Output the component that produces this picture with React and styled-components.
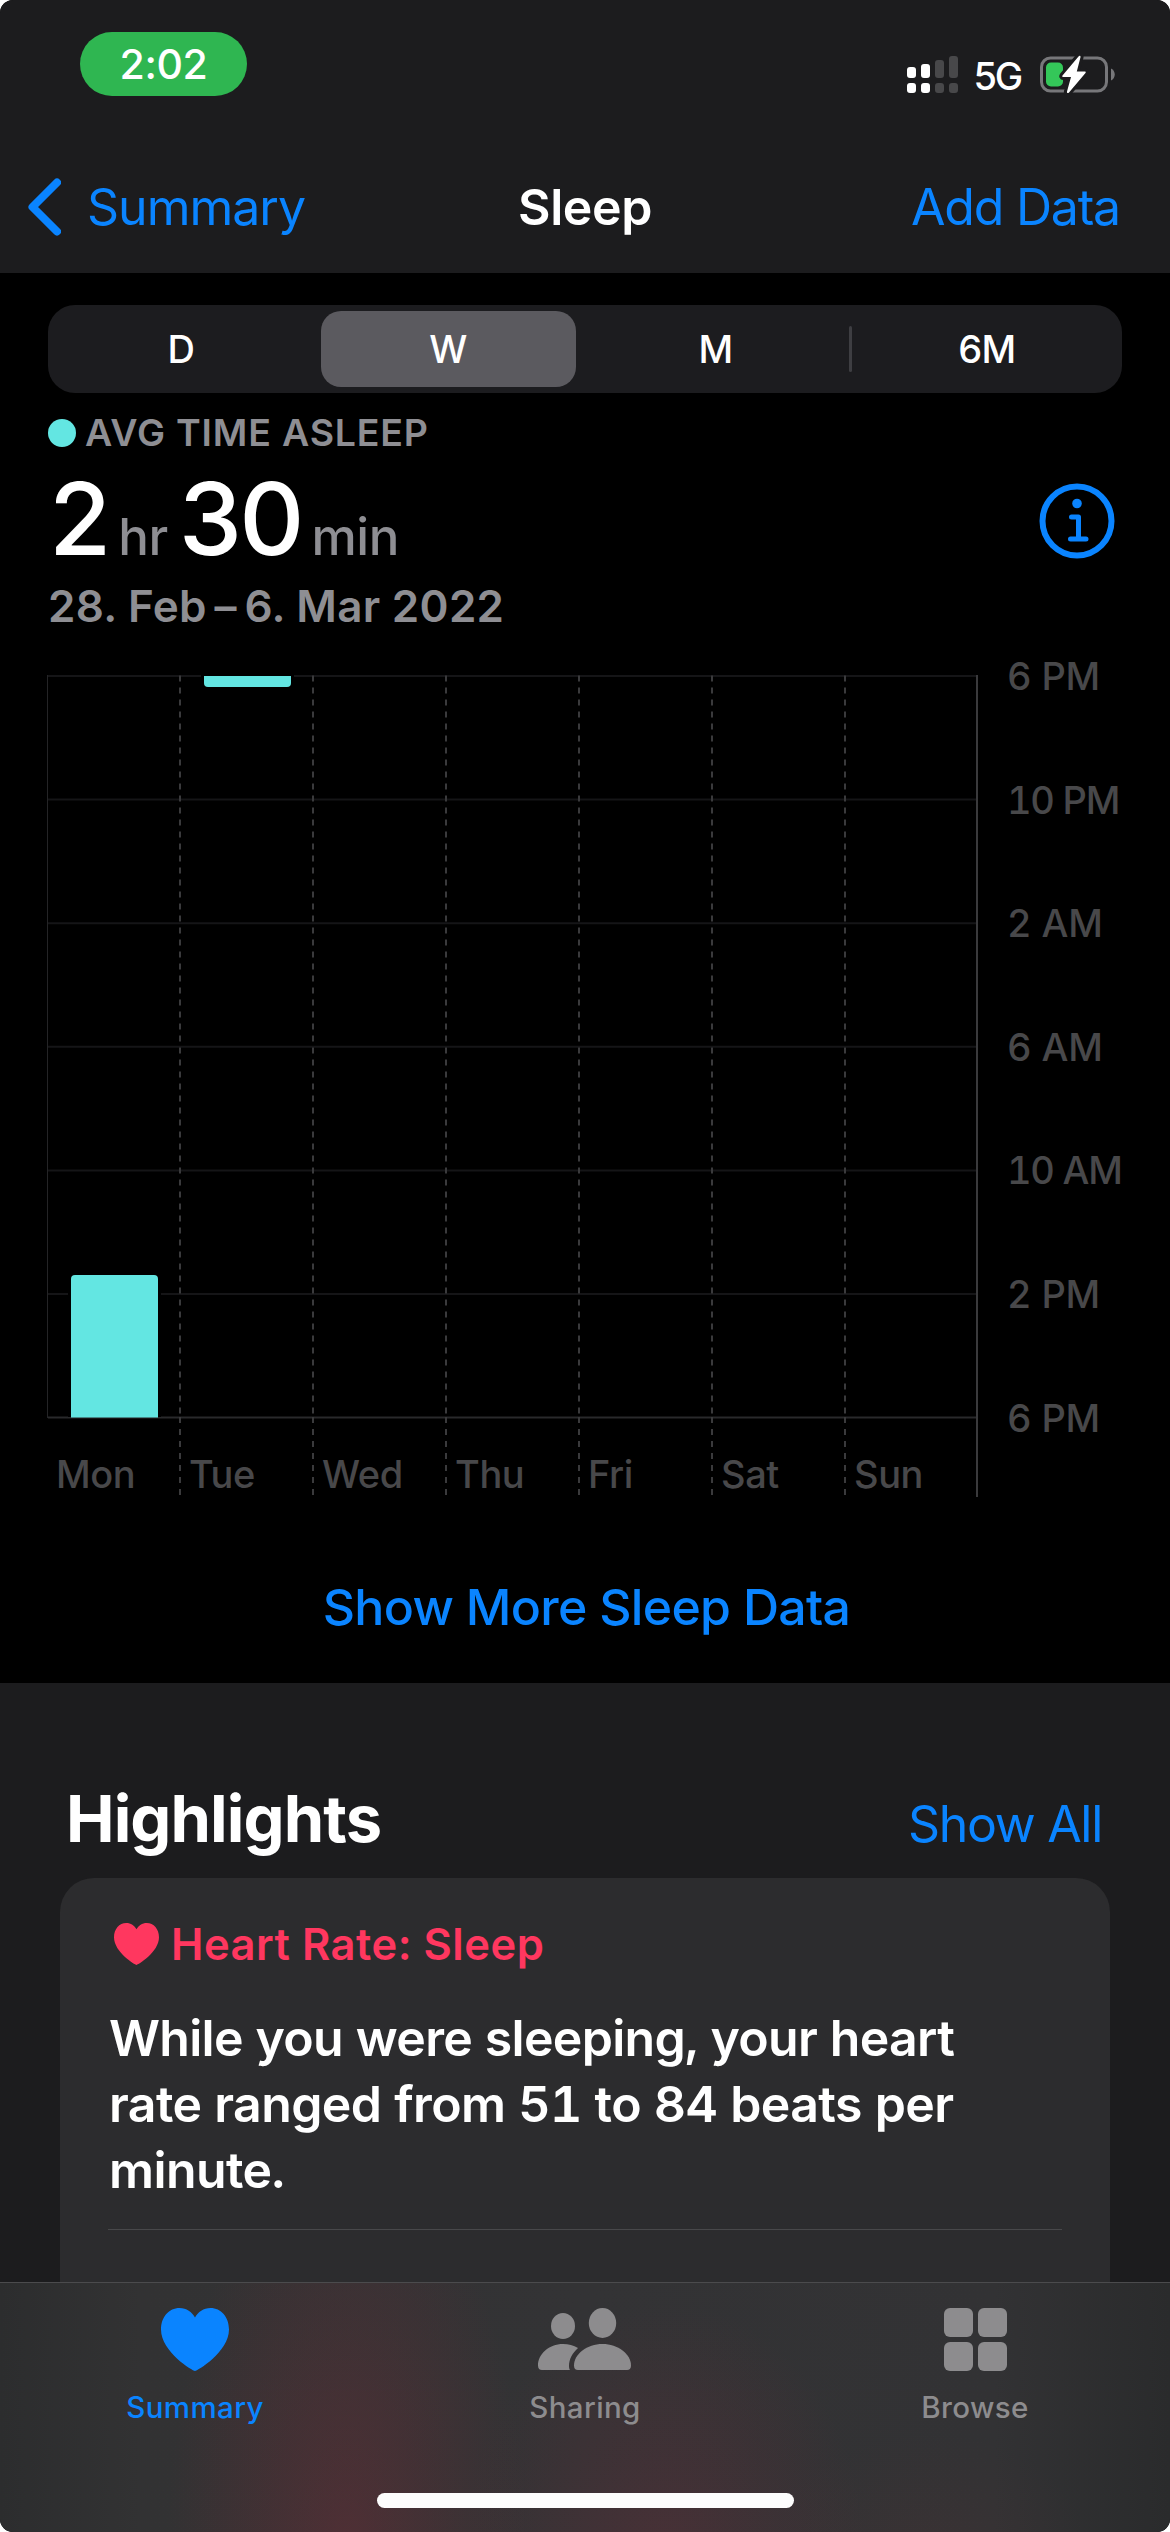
import React, { useState } from "react";
import styled, { createGlobalStyle } from 'styled-components';

const GlobalStyle = createGlobalStyle`
* { box-sizing: border-box; }
body {
margin: 0;
background: #FFFFFF;
font-family: Inter, "Liberation Sans", sans-serif;
-webkit-font-smoothing: antialiased;
}
button {
font-family: inherit;
background: none;
border: 0;
padding: 0;
margin: 0;
}`;

const Screen = styled.div`
width: 1170px;
height: 2532px;
display: flex;
flex-direction: column;
background: #000000;
border-radius: 13px;
overflow: hidden;`;

const Top = styled.header`
height: 273px;
flex: none;
background: #1C1C1E;`;

const StatusBar = styled.div`
height: 128px;
display: flex;
justify-content: space-between;
align-items: flex-start;
padding: 32px 55px 0 80px;`;

const Clock = styled.div`
width: 167px;
height: 64px;
border-radius: 32px;
background: #2FB651;
color: #FFFFFF;
font-size: 41px;
font-weight: 500;
line-height: 64px;
letter-spacing: -0.4px;
text-align: center;`;

const StatusRight = styled.div`
display: flex;
align-items: center;
height: 44px;
margin-top: 21px;`;

const Network = styled.span`
color: #FFFFFF;
font-size: 38px;
font-weight: 500;
line-height: 44px;
letter-spacing: -2.2px;
margin: 2px 19px 0 15px;`;

const NavBar = styled.nav`
height: 145px;
display: grid;
grid-template-columns: 1fr auto 1fr;
align-items: center;
padding: 13px 28px 0;`;

const NavButton = styled.button`
display: flex;
align-items: center;
gap: 26px;
justify-self: ${ props => props.$side || 'start' };
margin-right: ${ props => props.$side === 'end' ? '22px' : '0' };
color: #0A84FF;
font-size: 50px;
line-height: 60px;
letter-spacing: ${ props => props.$spacing || '-1px' };`;

const NavTitle = styled.h1`
margin: 0;
color: #FFFFFF;
font-size: 50px;
font-weight: 600;
line-height: 60px;
letter-spacing: -0.4px;`;

const Panel = styled.main`
height: 1410px;
flex: none;
display: flex;
flex-direction: column;
padding: 32px 48px 0;`;

const Segments = styled.div`
height: 88px;
display: grid;
grid-template-columns: 266px 268px 267px 3px 270px;
align-items: center;
justify-items: center;
border-radius: 27px;
background: #1C1C1F;`;

const Segment = styled.button`
width: 255px;
height: 76px;
border-radius: 20px;
background: ${ props => props.$active ? '#5B5A5F' : 'transparent' };
color: #FFFFFF;
font-size: 38px;
font-weight: 500;
letter-spacing: -0.5px;
line-height: 76px;`;

const SegmentLine = styled.div`
width: 3px;
height: 46px;
border-radius: 2px;
background: #3E3E42;`;

const Legend = styled.div`
display: flex;
align-items: center;
height: 40px;
margin-top: 20px;
gap: 9px;
color: #8E8E93;
font-size: 37.5px;
font-weight: 600;
line-height: 40px;
letter-spacing: 0.8px;`;

const Dot = styled.span`
width: 28px;
height: 28px;
border-radius: 50%;
background: #63E6E2;`;

const ValueRow = styled.div`
height: 112px;
display: flex;
justify-content: space-between;
align-items: center;
margin-top: 12px;
padding-right: 7px;`;

const Value = styled.div`
display: flex;
align-items: baseline;
margin-top: -6px;
padding-left: 1px;`;

const Number = styled.span`
color: #FFFFFF;
font-size: 101px;
font-weight: 500;
line-height: 112px;
letter-spacing: -3px;`;

const Unit = styled.span`
color: #8E8E93;
font-size: 51px;
font-weight: 500;
letter-spacing: -0.4px;
margin: 0 11px 0 10px;`;

const DateRange = styled.div`
height: 50px;
margin-top: 4px;
color: #8E8E93;
font-size: 44px;
font-weight: 600;
line-height: 50px;
letter-spacing: 0.3px;`;

const Chart = styled.svg`
display: block;
flex: none;
width: 1100px;
height: 860px;
margin: 15px 0 0 -1px;`;

const AxisText = styled.text`
fill: #48484A;
font-size: 38px;
font-weight: 500;
font-variant-numeric: tabular-nums;
letter-spacing: ${ props => props.$spacing || '0' };`;

const MoreButton = styled.button`
height: 60px;
margin-top: 71px;
padding-left: 3px;
color: #0A84FF;
font-size: 50px;
font-weight: 500;
line-height: 60px;
letter-spacing: -0.7px;`;

const Highlights = styled.section`
flex: 1;
min-height: 0;
display: flex;
flex-direction: column;
background: #1C1C1E;
padding: 102px 60px 0;
overflow: hidden;`;

const SectionHead = styled.div`
display: flex;
justify-content: space-between;
align-items: baseline;
height: 93px;
padding: 0 8px 0 6px;`;

const SectionTitle = styled.h2`
margin: 0;
color: #FFFFFF;
font-size: 65px;
font-weight: 700;
line-height: 68px;
letter-spacing: -0.9px;`;

const ShowAll = styled.button`
color: #0A84FF;
font-size: 50px;
line-height: 60px;
letter-spacing: -1.3px;`;

const Card = styled.article`
flex: 1;
min-height: 0;
border-radius: 34px 34px 0 0;
background: #2C2C2E;
padding: 38px 48px 0;`;

const CardTitle = styled.div`
display: flex;
align-items: center;
height: 56px;
padding-left: 6px;
gap: 12px;
color: #FF375F;
font-size: 43.5px;
font-weight: 600;
line-height: 56px;
letter-spacing: 0.5px;`;

const CardText = styled.p`
margin: 33px 0 0;
height: 225px;
color: #FFFFFF;
font-size: 50px;
font-weight: 600;
line-height: 66px;
font-variant-numeric: tabular-nums;
border-bottom: 1px solid #48484A;`;

const CardLine = styled.span`
display: block;
padding-left: 1px;
white-space: nowrap;
letter-spacing: ${ props => props.$spacing };`;

const TabBar = styled.footer`
height: 250px;
flex: none;
display: flex;
flex-direction: column;
align-items: center;
justify-content: space-between;
border-top: 1px solid #4B4B4D;
padding-bottom: 24px;
background:
radial-gradient(ellipse 180px 400px at 347px 270px, rgba(125, 42, 54, 0.38), rgba(125, 42, 54, 0) 100%),
radial-gradient(ellipse 200px 250px at 665px 270px, rgba(125, 42, 58, 0.28), rgba(125, 42, 58, 0) 100%),
radial-gradient(ellipse 160px 120px at 930px 270px, rgba(120, 50, 50, 0.1), rgba(120, 50, 50, 0) 100%),
linear-gradient(90deg, #2C2D2E 0%, #323233 12%, #333335 50%, #323234 85%, #2A2B2C 100%);`;

const Tabs = styled.div`
width: 100%;
display: grid;
grid-template-columns: repeat(3, 1fr);
padding-top: 25px;`;

const Tab = styled.button`
display: flex;
flex-direction: column;
align-items: center;
gap: 18px;
color: ${ props => props.$active ? '#0A84FF' : '#8D8C8E' };
font-size: 29.5px;
font-weight: 500;
line-height: 36px;
letter-spacing: 0.4px;`;

const HomeIndicator = styled.div`
width: 417px;
height: 15px;
border-radius: 8px;
background: #FDFDFD;`;

const HeartIcon = ({width, height}) => (
    <svg width={width} height={height} viewBox="0 0 68 63" fill="currentColor" preserveAspectRatio="none">
        <path d="M34 63C32 63 0 44 0 21.5C0 9 8 0 18.5 0C25.5 0 31 4 34 9.5C37 4 42.5 0 49.5 0C60 0 68 9 68 21.5C68 44 36 63 34 63Z" />
    </svg>
)

const PeopleIcon = () => (
    <svg width="94" height="63" viewBox="0 0 94 63" fill="currentColor">
        <ellipse cx="25" cy="18" rx="12" ry="13" />
        <path d="M4 62C1.500 62 0 60.500 0 57.500C0 46 11 36 25 36C30.500 36 35.500 37.500 40 40C34.500 45 31 51 31 58C31 59.500 31.300 61 32 62Z" />
        <ellipse cx="64.500" cy="15" rx="13.700" ry="15" />
        <path d="M40 62C37.300 62 36 60.500 36 57.500C36 46 49 36 64.500 36C80 36 93 46 93 57.500C93 60.500 91.500 62 89 62Z" />
    </svg>
)

const GridIcon = () => (
    <svg width="63" height="63" viewBox="0 0 63 63" fill="currentColor">
        <rect width="29" height="29" rx="6" />
        <rect x="34" width="29" height="29" rx="6" />
        <rect y="34" width="29" height="29" rx="6" />
        <rect x="34" y="34" width="29" height="29" rx="6" />
    </svg>
)

const InfoIcon = () => (
    <svg width="76" height="76" viewBox="0 0 76 76" fill="none" stroke="#0A84FF" strokeLinecap="round" strokeLinejoin="round">
        <circle cx="38" cy="38" r="34.500" strokeWidth="6" />
        <circle cx="38" cy="20.500" r="4.800" fill="#0A84FF" stroke="none" />
        <path d="M32.500 34H39.500V56M31.500 56H47" strokeWidth="5" />
    </svg>
)

const BackIcon = () => (
    <svg width="33" height="58" viewBox="0 0 33 58" fill="none" stroke="#0A84FF" strokeWidth="8" strokeLinecap="round" strokeLinejoin="round">
        <path d="M29 4.500L4.500 29L29 53.500" />
    </svg>
)

const SignalIcon = () => (
    <svg width="52" height="38" viewBox="0 0 52 38" fill="#FFFFFF">
        <rect x="0" y="11" width="9" height="11" rx="3" />
        <rect x="14" y="8" width="9" height="14" rx="3" />
        <rect x="28" y="4" width="9" height="18" rx="3" fill="#48484A" />
        <rect x="42" y="0" width="9" height="22" rx="3" fill="#48484A" />
        <rect x="0" y="27" width="9" height="10" rx="3" />
        <rect x="14" y="27" width="9" height="10" rx="3" />
        <rect x="28" y="27" width="9" height="10" rx="3" fill="#48484A" />
        <rect x="42" y="27" width="9" height="10" rx="3" fill="#48484A" />
    </svg>
)

const bolt = "M38.500 1.500L22.500 20.500C22 21.300 22.300 22 23.200 22H31L27 36.500C26.500 38 28 38.600 29 37.400L45.500 18C46 17.200 45.700 16.500 44.800 16.500H36.800L40.500 2.300C40.800 0.800 39.500 0.300 38.500 1.500Z";

const BatteryIcon = () => (
    <svg width="75" height="40" viewBox="0 0 75 40">
        <rect x="1.500" y="3" width="65" height="33" rx="9" fill="none" stroke="#77777A" strokeWidth="3" />
        <path d="M71 13.500C76 15.500 76 23.500 71 25.500Z" fill="#77777A" />
        <rect x="6" y="7.500" width="17" height="24" rx="5" fill="#34C759" />
        <path d={bolt} fill="#1C1C1E" stroke="#1C1C1E" strokeWidth="6" />
        <path d={bolt} fill="#FFFFFF" />
    </svg>
)

const days = ['Mon', 'Tue', 'Wed', 'Thu', 'Fri', 'Sat', 'Sun'];
const hours = ['6 PM', '10 PM', '2 AM', '6 AM', '10 AM', '2 PM', '6 PM'];
const plot = { top: 30, left: 1, right: 930, dayWidth: 133, hourHeight: 123.6 };

const SleepChart = () => (
    <Chart viewBox="0 0 1100 860">
        {hours.map((hour, i) => {
            const y = plot.top + i * plot.hourHeight;
            return (
                <React.Fragment key={i}>
                    <line x1={plot.left} x2={plot.right} y1={y} y2={y} stroke={i === 6 ? '#29292B' : '#151517'} strokeWidth="2" />
                    <AxisText x="960" y={y + 14} $spacing={hour.length > 4 ? '-1.3px' : '-0.2px'}>{hour}</AxisText>
                </React.Fragment>
            )
        })}
        <line x1="0.500" x2="0.500" y1="29" y2="772" stroke="#242426" strokeWidth="1" />
        {days.map((day, i) => {
            const x = i * plot.dayWidth;
            return (
                <React.Fragment key={day}>
                    {i > 0 && <path d={`M${x} 29.500V771M${x} 771V850`} stroke="#3A3A3C" strokeWidth="2" strokeDasharray="6 6" />}
                    <AxisText x={x + 9} y="842" $spacing="-0.4px">{day}</AxisText>
                </React.Fragment>
            )
        })}
        <line x1="930" x2="930" y1="29" y2="851" stroke="#3A3A3C" strokeWidth="2" />
        {/* sleep blocks */}
        <rect x="21" y="620" width="93" height="151" fill="#000000" />
        <path d="M24 771.500V633Q24 629 28 629H107Q111 629 111 633V771.500Z" fill="#63E6E2" />
        <rect x="154" y="28" width="93" height="14" fill="#000000" />
        <path d="M157 30H244V37Q244 41 240 41H161Q157 41 157 37Z" fill="#63E6E2" />
    </Chart>
)

const App = () => {
    const [range, setRange] = useState('W');

    const renderSegment = (name) => (
        <Segment $active={range === name} onClick={() => setRange(name)}>{name}</Segment>
    )

    return (
        <React.Fragment>
            <GlobalStyle />
            <Screen>
                <Top>
                    <StatusBar>
                        <Clock>2:02</Clock>
                        <StatusRight>
                            <SignalIcon />
                            <Network>5G</Network>
                            <BatteryIcon />
                        </StatusRight>
                    </StatusBar>
                    <NavBar>
                        <NavButton><BackIcon />Summary</NavButton>
                        <NavTitle>Sleep</NavTitle>
                        <NavButton $side="end" $spacing="-1.2px">Add Data</NavButton>
                    </NavBar>
                </Top>
                <Panel>
                    <Segments>
                        {renderSegment('D')}
                        {renderSegment('W')}
                        {renderSegment('M')}
                        <SegmentLine />
                        {renderSegment('6M')}
                    </Segments>
                    <Legend><Dot />AVG TIME ASLEEP</Legend>
                    <ValueRow>
                        <Value>
                            <Number>2</Number><Unit>hr</Unit>
                            <Number>30</Number><Unit>min</Unit>
                        </Value>
                        <InfoIcon />
                    </ValueRow>
                    <DateRange>28. Feb{'\u2009'}–{'\u2009'}6. Mar 2022</DateRange>
                    <SleepChart />
                    <MoreButton>Show More Sleep Data</MoreButton>
                </Panel>
                <Highlights>
                    <SectionHead>
                        <SectionTitle>Highlights</SectionTitle>
                        <ShowAll>Show All</ShowAll>
                    </SectionHead>
                    <Card>
                        <CardTitle><HeartIcon width="45" height="42" />Heart Rate: Sleep</CardTitle>
                        <CardText>
                            <CardLine $spacing="-0.7px">While you were sleeping, your heart </CardLine>
                            <CardLine $spacing="-0.6px">rate ranged from 51 to 84 beats per </CardLine>
                            <CardLine $spacing="-0.6px">minute.</CardLine>
                        </CardText>
                    </Card>
                </Highlights>
                <TabBar>
                    <Tabs>
                        <Tab $active><HeartIcon width="68" height="63" />Summary</Tab>
                        <Tab><PeopleIcon />Sharing</Tab>
                        <Tab><GridIcon />Browse</Tab>
                    </Tabs>
                    <HomeIndicator />
                </TabBar>
            </Screen>
        </React.Fragment>
    )
}

export default App;
